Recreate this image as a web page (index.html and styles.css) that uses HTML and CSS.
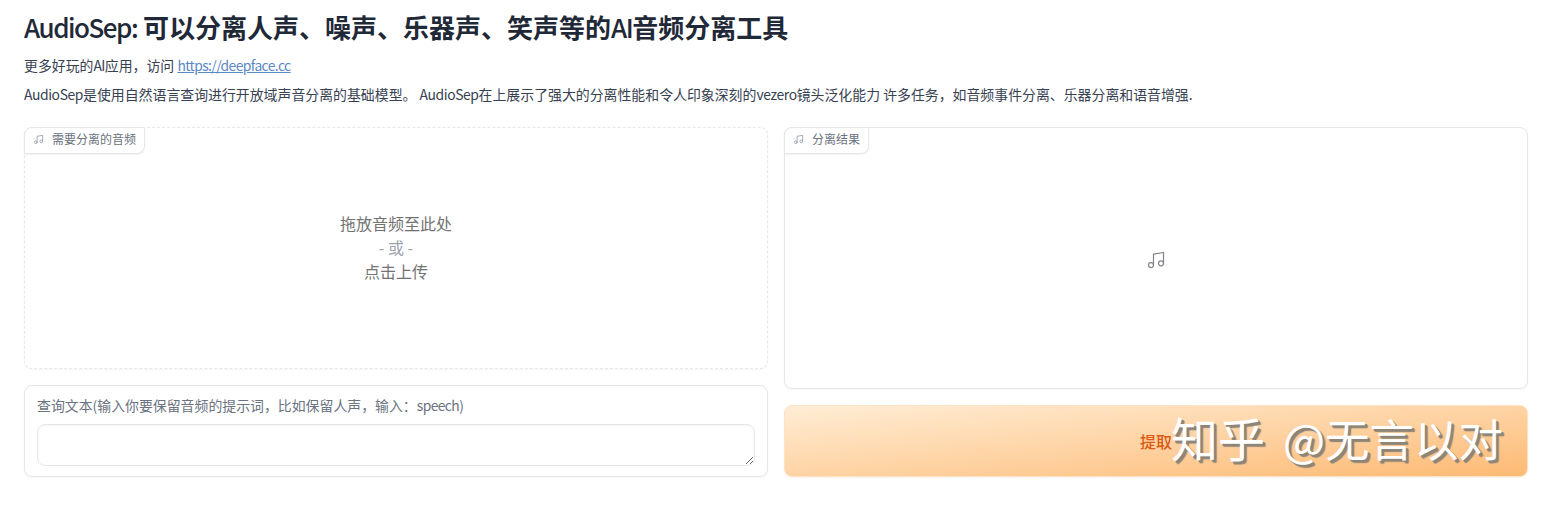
FILE: index.html
```html
<!DOCTYPE html>
<html lang="zh-CN">
<head>
    <meta charset="UTF-8">
    <meta name="viewport" content="width=device-width, initial-scale=1.0">
    <title>AudioSep</title>
    <link rel="stylesheet" href="styles.css">
</head>
<body>
    <div class="container">
        <h1><span class="latin">AudioSep:</span> <strong>可以分离人声、噪声、乐器声、笑声等的</strong><span class="latin">AI</span><strong>音频分离工具</strong></h1>
        <p class="intro">更多好玩的<span class="latin">AI</span>应用，访问 <a class="latin" href="#">https://deepface.cc</a></p>
        <p class="desc"><span class="latin">AudioSep</span>是使用自然语言查询进行开放域声音分离的基础模型。 <span class="latin">AudioSep</span>在上展示了强大的分离性能和令人印象深刻的<span class="latin">vezero</span>镜头泛化能力 许多任务，如音频事件分离、乐器分离和语音增强.</p>

        <div class="columns">
            <div class="column">
                <div class="block upload">
                    <div class="label">
                        <svg class="label-icon" viewBox="0 0 24 24" fill="none" stroke="currentColor" stroke-width="2" stroke-linecap="round" stroke-linejoin="round"><path d="M9 18V5l12-2v13"></path><circle cx="6" cy="18" r="3"></circle><circle cx="18" cy="16" r="3"></circle></svg>
                        <span>需要分离的音频</span>
                    </div>
                    <div class="drop">
                        <span>拖放音频至此处</span>
                        <span class="or">- 或 -</span>
                        <span>点击上传</span>
                    </div>
                </div>
                <div class="block query">
                    <label for="query">查询文本(输入你要保留音频的提示词，比如保留人声，输入：<span class="latin">speech)</span></label>
                    <textarea id="query"></textarea>
                </div>
            </div>
            <div class="column">
                <div class="block result">
                    <div class="label">
                        <svg class="label-icon" viewBox="0 0 24 24" fill="none" stroke="currentColor" stroke-width="2" stroke-linecap="round" stroke-linejoin="round"><path d="M9 18V5l12-2v13"></path><circle cx="6" cy="18" r="3"></circle><circle cx="18" cy="16" r="3"></circle></svg>
                        <span>分离结果</span>
                    </div>
                    <div class="empty">
                        <svg class="empty-icon" viewBox="0 0 24 24" fill="none" stroke="currentColor" stroke-width="2" stroke-linecap="round" stroke-linejoin="round"><path d="M9 18V5l12-2v13"></path><circle cx="6" cy="18" r="3"></circle><circle cx="18" cy="16" r="3"></circle></svg>
                    </div>
                </div>
                <button class="btn" type="button">提取</button>
            </div>
        </div>
    </div>
    <div class="watermark"><span class="wm-site">知乎</span><span class="wm-user">@无言以对</span></div>
</body>
</html>
```

FILE: styles.css
```css
* {
    margin: 0;
    padding: 0;
    box-sizing: border-box;
}

body {
    font-family: "Noto Sans CJK SC", "Liberation Sans", sans-serif;
    background: #fff;
    color: #27272a;
    position: relative;
    height: 506px;
    overflow: hidden;
}

.container {
    padding: 9px 19px 0 24px;
}

/* latin runs are set tighter than the font's own width */
.latin {
    letter-spacing: -0.6px;
}

h1 {
    font-size: 26px;
    line-height: 36px;
    font-weight: 500;
    color: #1f2937;
    white-space: nowrap;
}

h1 strong {
    font-weight: 700;
}

h1 .latin {
    letter-spacing: -1.5px;
}

.intro,
.desc {
    font-size: 13.9px;
    line-height: 19px;
    color: #374151;
    white-space: nowrap;
}

.intro {
    margin-top: 11px;
}

.desc {
    margin-top: 10px;
}

.desc .latin {
    letter-spacing: -0.4px;
}

.intro a {
    color: #5a87c5;
    text-decoration: underline;
}

.columns {
    display: flex;
    gap: 16px;
    margin-top: 23px;
}

.column {
    flex: 1;
    min-width: 0;
    display: flex;
    flex-direction: column;
    gap: 16px;
}

.block {
    border: 1px solid #e5e7eb;
    border-radius: 8px;
    background: #fff;
    box-shadow: 0 1px 2px rgba(0, 0, 0, 0.04);
}

.upload {
    height: 242px;
    border-style: dashed;
    display: flex;
    flex-direction: column;
}

.result {
    height: 262px;
    display: flex;
    flex-direction: column;
}

.label {
    align-self: flex-start;
    display: flex;
    align-items: center;
    gap: 8px;
    height: 27px;
    padding: 0 8px 5px;
    margin: -1px 0 0 -1px;
    font-size: 12px;
    color: #6b7280;
    background: #fff;
    border: 1px solid #e5e7eb;
    border-radius: 8px 0 8px 0;
    box-shadow: 0 1px 2px rgba(0, 0, 0, 0.06);
}

.label-icon {
    width: 11px;
    height: 11px;
    margin-top: 3px;
    color: #9ca3af;
}

.drop {
    flex: 1;
    display: flex;
    flex-direction: column;
    align-items: center;
    justify-content: center;
    font-size: 16px;
    line-height: 24px;
    color: #737373;
    padding-bottom: 29px;
}

.drop .or {
    color: #9ca3af;
}

.empty {
    flex: 1;
    display: flex;
    align-items: center;
    justify-content: center;
    padding-bottom: 23px;
}

.empty-icon {
    width: 20px;
    height: 20px;
    color: #85858c;
    stroke-width: 1.5;
}

.query {
    height: 92px;
    padding: 9px 12px;
}

.query label {
    display: block;
    font-size: 13.9px;
    line-height: 20px;
    color: #6b7280;
}

.query textarea {
    display: block;
    width: 100%;
    height: 42px;
    margin-top: 9px;
    border: 1px solid #e5e7eb;
    border-radius: 8px;
    box-shadow: inset 0 1px 2px rgba(0, 0, 0, 0.05);
    outline: none;
}

.btn {
    height: 72px;
    border: 1px solid #fde3c4;
    border-radius: 8px;
    background: linear-gradient(to bottom right, #ffedd5, #fdba74);
    color: #dc5a14;
    font-family: inherit;
    font-size: 16px;
    font-weight: 500;
    cursor: pointer;
    box-shadow: 0 1px 2px rgba(0, 0, 0, 0.05);
}

/* site watermark sits over the button */
.watermark {
    position: absolute;
    left: 1171px;
    top: 403px;
    display: flex;
    align-items: baseline;
    gap: 18px;
    line-height: 68px;
    white-space: nowrap;
    color: #fff;
    font-weight: 400;
    text-shadow: 2px 2px 0 #8d8578, 3px 3px 1px #8d8578;
}

.wm-site {
    font-size: 47px;
}

.wm-user {
    font-size: 44.5px;
}
```
